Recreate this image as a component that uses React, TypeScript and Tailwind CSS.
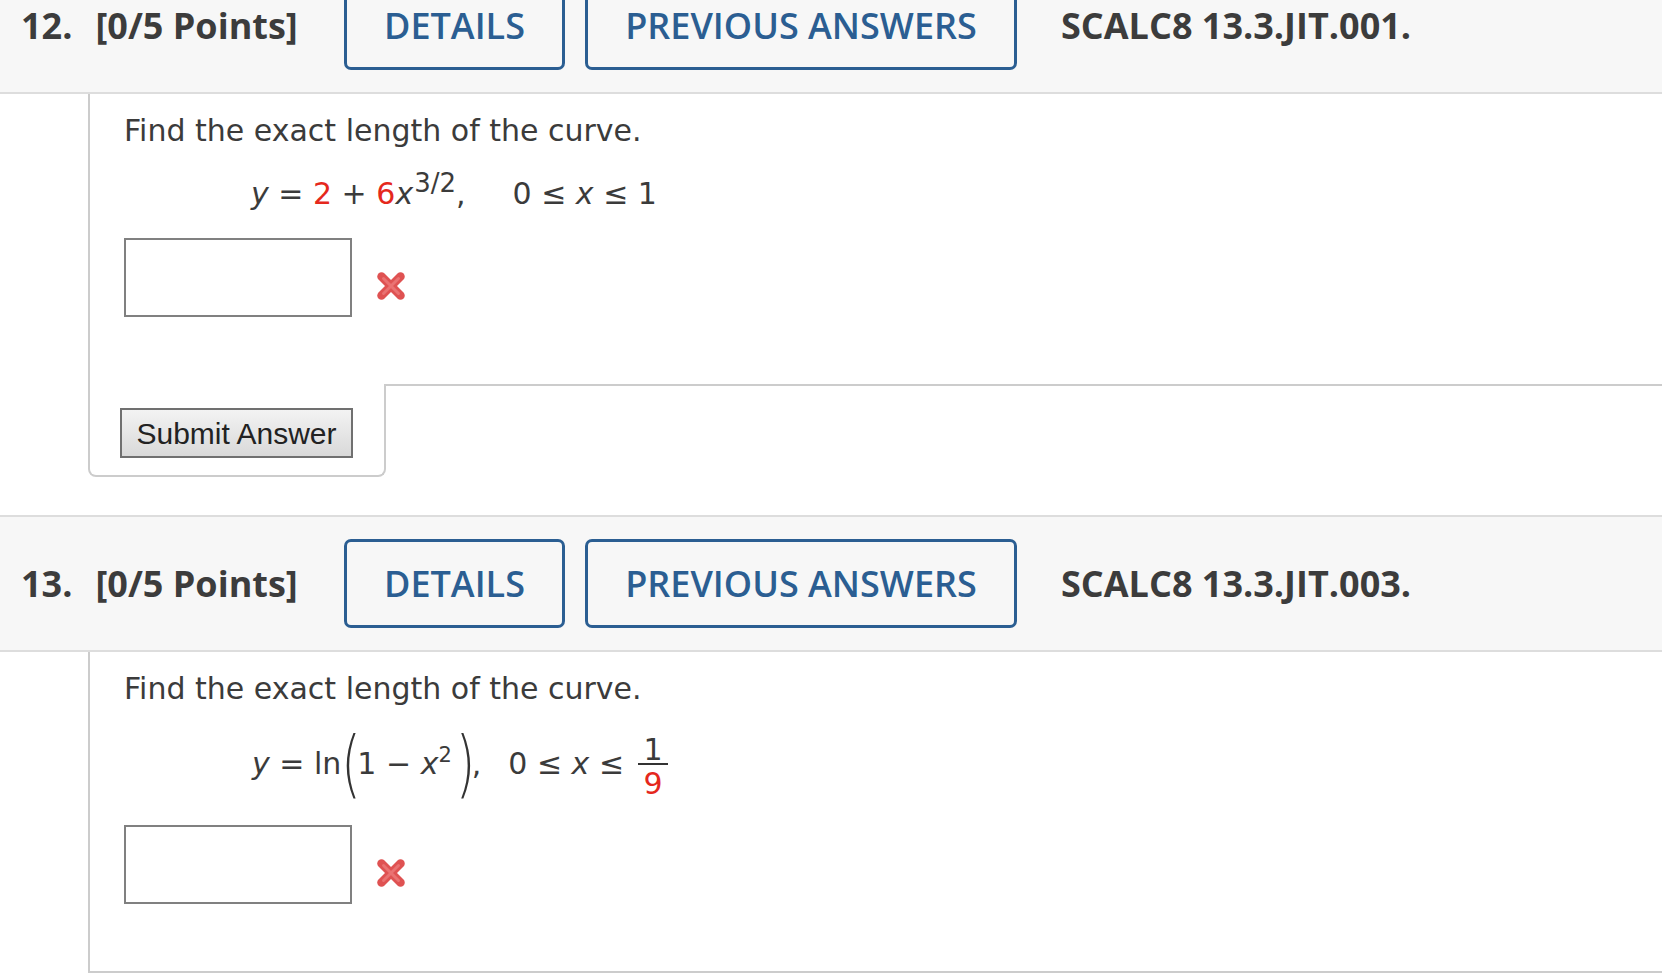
import React from "react";

const BLUE = "text-[#2b5e92] border-[#2b5e92]";

function Header({ num, code }: { num: number; code: string }) {
  return (
    <div className="flex h-[137px] items-center border-y-2 border-[#dddddd] bg-[#f7f7f7] pl-[21px] font-['Open_Sans',sans-serif] text-[#3c3c3c] whitespace-nowrap">
      <div className="flex w-[323px] items-center text-[36px] font-bold">
        <span>{num}.</span>
        <span className="ml-[23px]">[0/5 Points]</span>
      </div>
      <div className={`flex h-[89px] w-[221px] items-center justify-center rounded-[7px] border-[3px] text-[36px] font-semibold ${BLUE}`}>
        DETAILS
      </div>
      <div className={`ml-[20px] flex h-[89px] w-[432px] items-center justify-center rounded-[7px] border-[3px] text-[36px] font-semibold ${BLUE}`}>
        PREVIOUS ANSWERS
      </div>
      <div className="ml-[44px] text-[36px] font-bold">{code}</div>
    </div>
  );
}

function RedX() {
  return (
    <svg width="32" height="32" viewBox="0 0 32 32" className="ml-[23px] mt-[17px] shrink-0">
      <g strokeLinecap="round">
        <line x1="6.5" y1="6.5" x2="25.5" y2="25.5" stroke="#df5252" strokeWidth="8.5" />
        <line x1="25.5" y1="6.5" x2="6.5" y2="25.5" stroke="#df5252" strokeWidth="8.5" />
        <line x1="8.5" y1="8.5" x2="23.5" y2="23.5" stroke="#ea7272" strokeWidth="3" />
        <line x1="23.5" y1="8.5" x2="8.5" y2="23.5" stroke="#ea7272" strokeWidth="3" />
      </g>
    </svg>
  );
}

function AnswerRow() {
  return (
    <div className="mt-[26px] flex items-center">
      <div className="h-[79px] w-[228px] border-2 border-[#808080] bg-white" />
      <RedX />
    </div>
  );
}

const RED = "text-[#e5281d]";

export default function App() {
  return (
    <div className="-mt-[43px] min-h-[1021px] bg-white text-[#3b3b3b]">
      <Header num={12} code="SCALC8 13.3.JIT.001." />
      <div className="ml-[88px] font-['DejaVu_Sans',Verdana,sans-serif]">
        <div className="border-l-2 border-[#cccccc] pb-[67px] pl-[34px] pt-[19px]">
          <p className="text-[30px] leading-[36px]">Find the exact length of the curve.</p>
          <div className="ml-[127px] mt-[27px] whitespace-nowrap text-[30px] leading-[36px]">
            <span className="italic">y</span> = <span className={RED}>2</span> +{" "}
            <span className={RED}>6</span>
            <span className="italic">x</span>
            <span className="relative -top-[12px] ml-[1px] text-[26px] leading-none">3/2</span>,
            <span className="ml-[47px]">
              0 ≤ <span className="italic">x</span> ≤ 1
            </span>
          </div>
          <AnswerRow />
        </div>
        <div className="flex">
          <div className="h-[93px] w-[298px] rounded-b-[8px] border-x-2 border-b-2 border-[#cccccc] pl-[30px] pt-[24px]">
            <button className="flex h-[50px] w-[233px] items-center justify-center border-2 border-[#707070] bg-linear-to-b from-[#f3f3f3] to-[#d9d9d9] font-['Liberation_Sans',Arial,sans-serif] text-[30px] text-[#222222]">
              Submit Answer
            </button>
          </div>
          <div className="flex-1 border-t-2 border-[#cccccc]" />
        </div>
      </div>

      <div className="mt-[38px]">
        <Header num={13} code="SCALC8 13.3.JIT.003." />
      </div>
      <div className="ml-[88px] font-['DejaVu_Sans',Verdana,sans-serif]">
        <div className="border-b-2 border-l-2 border-[#cccccc] pb-[67px] pl-[34px] pt-[19px]">
          <p className="text-[30px] leading-[36px]">Find the exact length of the curve.</p>
          <div className="ml-[128px] mt-[22px] flex h-[70px] items-center whitespace-pre text-[30px] leading-[36px]">
            <span>
              <span className="italic">y</span> = ln
            </span>
            <span className="inline-block w-[16px] scale-y-[1.45] text-center text-[50px] font-extralight leading-[50px] text-[#333333]">(</span>
            <span>
              1 − <span className="italic">x</span>
              <span className="relative -top-[12px] text-[21px] leading-none">2</span>
            </span>
            <span className="ml-[4px] inline-block w-[16px] scale-y-[1.45] text-center text-[50px] font-extralight leading-[50px] text-[#333333]">)</span>
            <span>,</span>
            <span className="ml-[27px]">
              0 ≤ <span className="italic">x</span> ≤
            </span>
            <span className="ml-[14px] flex w-[30px] flex-col items-center pt-[5px]">
              <span className="h-[26px] leading-[26px]">1</span>
              <span className="h-[2px] w-[30px] bg-[#333333]" />
              <span className={`mt-[6px] h-[26px] leading-[26px] ${RED}`}>9</span>
            </span>
          </div>
          <AnswerRow />
        </div>
      </div>
    </div>
  );
}
